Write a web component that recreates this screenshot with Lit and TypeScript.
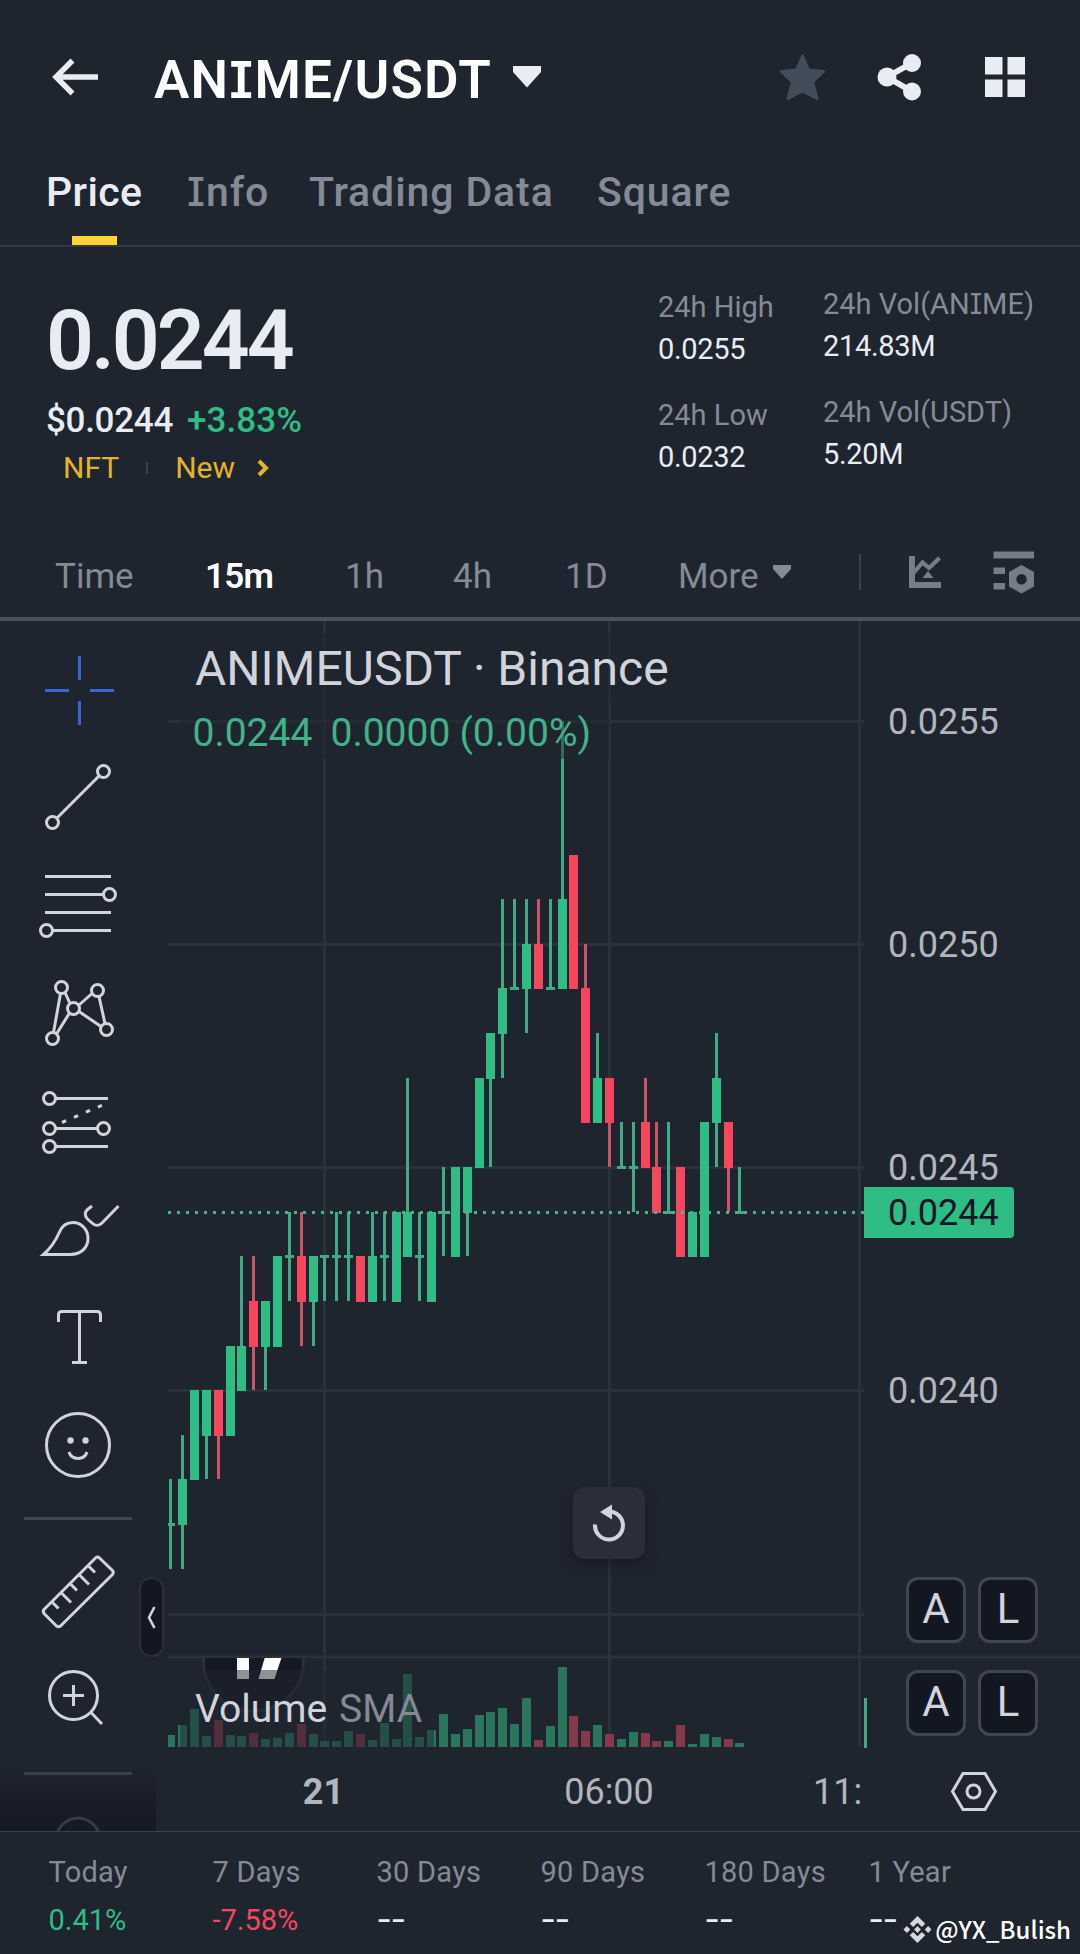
import { LitElement, html, svg, css } from "lit";
import { customElement } from "lit/decorators.js";

type Candle = [dir: 0 | 1, high: number, top: number, bottom: number, low: number, volume: number];

// Prices are in ticks of 0.0001; dir 1 = rising, 0 = falling.
const CANDLES: Candle[] = [
  [1, 238, 237, 237, 236, 12], [1, 239, 238, 237, 236, 22], [1, 240, 240, 238, 238, 38],
  [1, 240, 240, 239, 238, 11], [0, 240, 240, 239, 238, 27], [1, 241, 241, 239, 239, 12],
  [1, 243, 241, 240, 240, 11], [0, 243, 242, 241, 240, 14], [1, 242, 242, 241, 240, 8],
  [1, 243, 243, 241, 241, 9], [1, 244, 243, 243, 242, 14], [0, 244, 243, 242, 241, 23],
  [1, 243, 243, 242, 241, 13], [1, 243, 243, 243, 242, 6], [1, 244, 243, 243, 242, 6],
  [1, 244, 243, 243, 242, 16], [0, 243, 243, 242, 242, 13], [1, 244, 243, 242, 242, 7],
  [1, 244, 243, 243, 242, 24], [1, 244, 244, 242, 242, 8], [1, 247, 244, 243, 243, 73],
  [1, 244, 243, 243, 242, 10], [1, 244, 244, 242, 242, 17], [1, 245, 244, 244, 243, 33],
  [1, 245, 245, 243, 243, 13], [1, 245, 245, 244, 243, 18], [1, 247, 247, 245, 245, 32],
  [1, 248, 248, 247, 245, 35], [1, 251, 249, 248, 247, 39], [1, 251, 249, 249, 249, 23],
  [1, 251, 250, 249, 248, 49], [0, 251, 250, 249, 249, 7], [1, 251, 249, 249, 249, 21],
  [1, 255, 251, 249, 249, 80], [0, 252, 252, 249, 249, 31], [0, 250, 249, 246, 246, 16],
  [1, 248, 247, 246, 246, 22], [0, 247, 247, 246, 245, 13], [1, 246, 245, 245, 245, 8],
  [1, 246, 245, 245, 244, 15], [0, 247, 246, 245, 245, 14], [0, 246, 245, 244, 244, 6],
  [1, 246, 244, 244, 244, 6], [0, 245, 245, 243, 243, 22], [1, 244, 244, 243, 243, 3],
  [1, 246, 246, 243, 243, 13], [1, 248, 247, 246, 245, 10], [0, 246, 246, 245, 244, 8],
  [1, 245, 244, 244, 244, 4],
];

const candleX = (i: number) => 170.5 + 12 * i - Math.floor((i + 1) / 7);
const priceY = (tick: number) => Math.round(1167 + (245 - tick) * 44.63) + 0.5;

const serifI = html`<span class="si">I</span>`;

@customElement("tool-rail")
export class ToolRail extends LitElement {
  static styles = css`
    :host { display: flex; flex-direction: column; width: 168px; height: 1210px; padding-top: 15px; box-sizing: border-box; overflow: hidden; position: relative; }
    svg { display: block; flex: none; width: 168px; fill: none; stroke: #d1d4dc; stroke-width: 3; }
    .cross { stroke: #3b66d1; }
    .rule { stroke: #434651; }
    .solid { fill: #d1d4dc; stroke: none; }
    .fade { position: absolute; left: 0; bottom: 0; width: 156px; height: 66px; background: linear-gradient(#1f252f00, #151a24 80%); }
    .more { stroke: #363b46; position: relative; }
  `;

  private cell(y: number, h: number, content: unknown, cls = "") {
    return html`<svg class=${cls} height=${h} viewBox="0 ${y} 168 ${h}">${content}</svg>`;
  }

  render() {
    const dot = (x: number, y: number) => svg`<circle cx=${x} cy=${y} r="6"/>`;
    return html`
      <div class="fade"></div>
      ${this.cell(636, 108, svg`<path d="M79.5 656v24M79.5 701v24M45 690.5h24M90 690.5h24"/>`, "cross")}
      ${this.cell(744, 108, svg`${dot(52.5, 822.5)}${dot(103.5, 771.5)}<path d="M57 818L99 776"/>`)}
      ${this.cell(852, 108, svg`<path d="M45 876.5h66M45 894.5h58M45 912.5h66M53 930.5h58"/>${dot(109.5, 894.5)}${dot(46.5, 930.5)}`)}
      ${this.cell(960, 108, svg`${dot(61.5, 987.5)}${dot(97.5, 990.5)}${dot(73.5, 1008.5)}${dot(106.5, 1029.5)}${dot(52.5, 1038.5)}
        <path d="M60.500 993.500L53.500 1032.500M65 992.500L70 1003.500M69.500 1013L56.500 1034M79 1005L92 993.500M79 1011.500L101 1026.500M99 996.500L105 1023.500"/>`)}
      ${this.cell(1068, 108, svg`${dot(49.5, 1098.5)}${dot(49.5, 1128.5)}${dot(103.5, 1128.5)}${dot(49.5, 1146.5)}
        <path d="M56 1098.500h52M56 1128.500h41M56 1146.500h52"/><path stroke-dasharray="4.500 8.500" d="M62 1122.500L105 1104"/>`)}
      ${this.cell(1176, 108, svg`<path d="M43.500 1254.500H70C82 1254.500 88 1247 88 1238.500C88 1229 81 1222.500 73 1222.500C66 1222.500 62 1226 59.500 1232C56 1240 51 1248 43.500 1254.500Z"/>
        <path d="M92 1206L87.500 1209.500C84.500 1212 84.500 1216 87.500 1219L92 1223C95 1226 99 1226 102 1223L118.500 1206"/>`)}
      ${this.cell(1284, 108, svg`<path d="M58.500 1322V1315Q58.500 1311.500 62 1311.500H97Q100.500 1311.500 100.500 1315V1322M79.500 1311.500V1362.500M72 1362.500H87"/>`)}
      ${this.cell(1392, 108, svg`<circle cx="78" cy="1445" r="31.500"/><circle class="solid" cx="70.500" cy="1440.500" r="3.200"/><circle class="solid" cx="85.500" cy="1440.500" r="3.200"/><path d="M69 1452Q71 1458.500 78 1458.500T87 1452"/>`)}
      ${this.cell(1500, 36, svg`<path d="M24 1518.500H132"/>`, "rule")}
      ${this.cell(1536, 108, svg`<path stroke-linejoin="round" d="M95.500 1558Q97.500 1556 99.500 1558L112.500 1570.500Q114 1572.500 112.500 1574.500L60.500 1626Q58.500 1627.500 56.500 1626L44 1613.500Q42.500 1611.500 44 1609.500Z"/>
        <path d="M52 1602l6.500 6.500M61.500 1593l9.500 9.500M70.500 1584l6.500 6.500M79.500 1575l9.500 9.500M88.500 1566l6.500 6.500"/>`)}
      ${this.cell(1644, 108, svg`<circle cx="73.500" cy="1695.500" r="24"/><path d="M91 1712.500L102 1724M63 1695.500H84M73.500 1685V1706"/>`)}
      ${this.cell(1752, 36, svg`<path d="M24 1773.500H132"/>`, "rule")}
      ${this.cell(1788, 43, svg`<circle cx="78" cy="1840" r="22"/>`, "more")}
    `;
  }
}

@customElement("price-chart")
export class PriceChart extends LitElement {
  static styles = css`
    :host { display: block; position: relative; width: 912px; height: 1210px; font-family: Roboto, sans-serif; }
    .plot { display: block; }
    .grid { stroke: #2b313b; stroke-width: 3; }
    .up { fill: #2ebd85; }
    .down { fill: #f6465d; }
    .wick.up { fill: #42ab86; }
    .wick.down { fill: #cb5366; }
    .vol.up { fill: #2a765d; }
    .vol.down { fill: #86394b; }
    .last { stroke: #48b48b; stroke-width: 3; stroke-dasharray: 3 6; }
    .veil { fill: #1f252f; opacity: 0.5; }
    .axis { fill: #b2b5be; font-size: 36px; }
    .bold { font-weight: 700; }
    .tag { fill: #131722; font-size: 36px; }
    .ring { fill: #141923; stroke: #2b303b; stroke-width: 3; }
    .mark { fill: #ffffff; }
    .icon { fill: none; stroke: #d1d4dc; stroke-width: 3; }
    .legend { position: absolute; white-space: pre; line-height: 60px; color: #d1d4dc; }
    .name { left: 27px; top: 17.500px; font-size: 48px; }
    .quote { left: 24.500px; top: 81.500px; font-size: 39px; color: #42b288; display: flex; }
    .quote span:nth-child(1) { width: 138px; }
    .quote span:nth-child(2) { width: 129px; }
    .volume { left: 27px; top: 1058px; font-size: 39px; display: flex; gap: 12px; }
    .muted { color: #868993; }
    .pair { position: absolute; left: 738px; display: flex; gap: 12px; }
    .price-scale { top: 956px; }
    .volume-scale { top: 1049px; }
    .key { box-sizing: border-box; width: 60px; height: 66px; border: 3px solid #434651; border-radius: 12px; background: #131722; color: #d1d4dc; font-size: 42px; line-height: 58px; text-align: center; }
    .reset { position: absolute; left: 405px; top: 866px; width: 72px; height: 72px; border-radius: 12px; background: #2a2e38; box-shadow: 0 6px 12px #10141c99; }
    .reset svg { display: block; }
    .handle { position: absolute; box-sizing: border-box; left: -29px; top: 956px; width: 25px; height: 80px; border: 2px solid #2a2e39; border-radius: 12px; background: #131722; }
    .handle svg { display: block; }
  `;

  private candle([dir, high, top, bottom, low, volume]: Candle, i: number) {
    const x = candleX(i);
    const tone = dir ? "up" : "down";
    const left = Math.max(168, x - 4.5);
    const width = x + 4.5 - left;
    const doji = top === bottom;
    const y = priceY(top) - (doji ? 1.5 : 0.5);
    return svg`
      <rect class="vol ${tone}" x=${left} y=${1747 - volume} width=${width} height=${volume}/>
      ${high > low ? svg`<rect class="wick ${tone}" x=${x - 1.5} y=${priceY(high) - 0.5} width="3" height=${priceY(low) - priceY(high)}/>` : ""}
      <rect class="${doji ? "wick" : ""} ${tone}" x=${left} y=${y} width=${width} height=${doji ? 3 : priceY(bottom) - priceY(top) + 1}/>`;
  }

  render() {
    return html`
      <svg class="plot" width="912" height="1210" viewBox="168 621 912 1210">
        <g class="grid">
          ${[324.5, 609.5, 859.5].map((x) => svg`<path d="M${x} 621V1747"/>`)}
          ${[721.5, 944.5, 1167.5, 1390.5, 1614.5].map((y) => svg`<path d="M168 ${y}H864"/>`)}
          <path d="M168 1657H1080"/>
        </g>
        <clipPath id="pane"><rect x="168" y="1658" width="400" height="90"/></clipPath>
        <g clip-path="url(#pane)">
          <circle class="ring" cx="253.500" cy="1661" r="50"/>
          <path class="mark" d="M237 1650h12v29h-12zM267 1650h17L274.500 1679h-16z"/>
        </g>
        ${CANDLES.map((c, i) => this.candle(c, i))}
        <path class="last" d="M168 1212.500H864"/>
        <rect class="veil" x="180" y="633" width="500" height="66"/>
        <rect class="veil" x="180" y="699" width="429" height="60"/>
        <rect class="veil" x="180" y="1670" width="254" height="77"/>
        <rect class="wick up" x="864" y="1698" width="3" height="50"/>
        <g class="axis">
          <text x="888" y="734">0.0255</text>
          <text x="888" y="957">0.0250</text>
          <text x="888" y="1180">0.0245</text>
          <text x="888" y="1403">0.0240</text>
          <text class="bold" x="323.500" y="1804" text-anchor="middle">21</text>
          <text x="609" y="1804" text-anchor="middle">06:00</text>
          <text x="813" y="1804">11:</text>
        </g>
        <path class="up" d="M864 1187h146q4 0 4 4v43q0 4-4 4h-146z"/>
        <text class="tag" x="888" y="1225">0.0244</text>
        <path class="icon" d="M952.500 1791.500L963 1773.500H985L995.500 1791.500L985 1809.500H963Z"/>
        <circle class="icon" cx="973.500" cy="1791.500" r="6.500"/>
      </svg>
      <div class="legend name">ANIMEUSDT · Binance</div>
      <div class="legend quote"><span>0.0244</span><span>0.0000</span><span>(0.00%)</span></div>
      <div class="legend volume"><span>Volume</span><span class="muted">SMA</span></div>
      <div class="reset"><svg width="72" height="72" viewBox="573 1487 72 72">
        <path fill="none" stroke="#d1d4dc" stroke-width="4" d="M595 1524.500A14 14 0 1 0 609 1511.500"/>
        <path fill="#d1d4dc" d="M600 1512L612 1504.500V1519.500Z"/></svg></div>
      <div class="pair price-scale"><div class="key">A</div><div class="key">L</div></div>
      <div class="pair volume-scale"><div class="key">A</div><div class="key">L</div></div>
      <div class="handle"><svg width="21" height="76" viewBox="141 1579 21 76"><path fill="none" stroke="#d1d4dc" stroke-width="2.600" d="M154.500 1607L149 1617.500L154.500 1628"/></svg></div>
    `;
  }
}

@customElement("app-root")
export class AppRoot extends LitElement {
  static styles = css`
    :host { display: block; width: 1080px; height: 1954px; overflow: hidden; background: #1f252f; color: #eaecf4; font-family: Roboto, sans-serif; }
    .si { font-family: Inter, sans-serif; font-feature-settings: "cv08" 1, "ss02" 1; font-size: 0.97em; }
    .top { display: flex; align-items: center; height: 154px; }
    .back { margin-left: 50px; }
    .pair { margin-left: 54px; padding-top: 5px; width: 336px; font-size: 53px; font-weight: 600; color: #ffffff; white-space: nowrap; letter-spacing: 1.200px; }
    .caret { margin-left: 22px; margin-right: auto; }
    .actions { display: flex; align-items: center; padding-right: 54px; gap: 48px; }
    .apps { margin-left: 12px; }
    svg { display: block; flex: none; }
    .tabs { display: grid; grid-template-columns: 141px 122px 288px auto; box-sizing: border-box; height: 93px; padding-left: 46px; border-bottom: 2px solid #333a45; font-size: 41px; line-height: 76px; color: #858a97; font-weight: 500; letter-spacing: 0.9px; }
    .tab { width: max-content; white-space: nowrap; }
    .tab.on { color: #eaecf4; letter-spacing: 0.4px; }
    .tab.on::after { content: ""; display: block; width: 45px; height: 9px; margin: 6px auto 0; background: #fcd535; }
    .stats { display: flex; height: 288px; }
    .left { width: 613px; box-sizing: border-box; padding: 44px 0 0 46px; white-space: nowrap; }
    .facts:not(.right) { margin-left: 45px; }
    .price { font-size: 84px; line-height: 100px; font-weight: 600; letter-spacing: -3px; }
    .sub { display: flex; margin-top: 10px; font-size: 35px; line-height: 40px; font-weight: 500; letter-spacing: -0.300px; }
    .usd { width: 141px; }
    .gain { color: #2ebd85; letter-spacing: 0.100px; }
    .tags { display: flex; align-items: center; margin: 9px 0 0 17px; font-size: 30px; line-height: 36px; color: #e3b32c; }
    .bar { width: 2px; height: 12px; margin: 0 27px 0 27px; background: #3a414d; }
    .chev { margin-left: 22px; }
    .facts { padding-top: 39px; width: 165px; font-size: 29px; line-height: 42px; white-space: nowrap; }
    .facts.right { padding-top: 36px; width: auto; }
    .label { color: #858a97; }
    .figure { letter-spacing: -0.300px; }
    .fact + .fact { margin-top: 24px; }
    .spans { display: grid; grid-template-columns: 150px 140px 108px 112px 113px 94px 87px 49px 85px 41px; align-items: center; box-sizing: border-box; height: 86px; padding-left: 55px; border-bottom: 4px solid #4b515c; font-size: 35px; color: #858a97; }
    .spans .on { color: #ffffff; font-weight: 600; letter-spacing: -0.700px; }
    .divider { width: 2px; height: 36px; margin-bottom: 8px; background: #3a414d; }
    .lift { margin-bottom: 8px; }
    .body { display: flex; }
    .foot { display: flex; position: relative; box-sizing: border-box; height: 123px; padding: 19px 0 0 48.500px; border-top: 1px solid #3a404b; font-size: 29px; }
    .period { width: 164px; line-height: 42px; white-space: nowrap; }
    .period .label { height: 48px; letter-spacing: 0.250px; }
    .pos { color: #2ebd85; }
    .neg { color: #f6465d; }
    .none { font-weight: 500; transform: scaleX(1.450); transform-origin: left; }
    .brand { position: absolute; right: 9px; bottom: 6px; display: flex; align-items: center; gap: 3px; color: #ffffff; font-family: "Noto Sans CJK SC", "Noto Sans", sans-serif; font-size: 24px; line-height: 38px; font-weight: 500; }
  `;

  private fact(label: string, value: string, mark = false) {
    const [head, tail] = label.split("I");
    return html`<div class="fact"><div class="label">${mark ? html`${head}${serifI}${tail}` : label}</div><div class="figure">${value}</div></div>`;
  }

  render() {
    const periods = [
      ["Today", "0.41%", "pos"], ["7 Days", "-7.58%", "neg"], ["30 Days", "--", "none"],
      ["90 Days", "--", "none"], ["180 Days", "--", "none"], ["1 Year", "--", "none"],
    ];
    return html`
      <div class="top">
        <svg class="back" width="50" height="50" viewBox="50 52 50 50"><path fill="none" stroke="#eaecf4" stroke-width="5.500" d="M98 77H56M72.500 60.500L56 77L72.500 93.500"/></svg>
        <div class="pair">AN${serifI}ME/USDT</div>
        <svg class="caret" width="30" height="24" viewBox="512 66 30 24"><path fill="#eaecf4" d="M513 67h28v6L527 88.500L513 73z"/></svg>
        <div class="actions">
          <svg width="48" height="48" viewBox="778 53 48 48"><path fill="#434d59" stroke="#434d59" stroke-width="3" stroke-linejoin="round" d="M802.500 56L808.500 70L823.500 71.500L812.500 82L817 98.500L802.500 91L788 98.500L792.500 82L781.500 71.500L796.500 70Z"/></svg>
          <svg width="50" height="50" viewBox="874 52 50 50"><g fill="#eaecf4"><circle cx="912" cy="63" r="9"/><circle cx="887" cy="77" r="9.500"/><circle cx="912" cy="91.500" r="9"/></g><path fill="none" stroke="#eaecf4" stroke-width="6" d="M912 63L887 77L912 91.500"/></svg>
          <svg class="apps" width="42" height="42" viewBox="984 56 42 42"><path fill="#eaecf4" d="M985 57h17.500v17.500h-17.500zM1007.500 57h17.500v17.500h-17.500zM985 79.500h17.500v17.500h-17.500zM1007.500 79.500h17.500v17.500h-17.500z"/></svg>
        </div>
      </div>
      <div class="tabs">
        <div class="tab on">Price</div><div class="tab">${serifI}nfo</div><div class="tab">Trading Data</div><div class="tab">Square</div>
      </div>
      <div class="stats">
        <div class="left">
          <div class="price">0.0244</div>
          <div class="sub"><span class="usd">$0.0244</span><span class="gain">+3.83%</span></div>
          <div class="tags"><span>NFT</span><span class="bar"></span><span>New</span>
            <svg class="chev" width="12" height="18" viewBox="259 458 12 18"><path fill="none" stroke="#e3b32c" stroke-width="4" d="M261 460L268 467L261 474"/></svg></div>
        </div>
        <div class="facts">${this.fact("24h High", "0.0255")}${this.fact("24h Low", "0.0232")}</div>
        <div class="facts right">${this.fact("24h Vol(ANIME)", "214.83M", true)}${this.fact("24h Vol(USDT)", "5.20M")}</div>
      </div>
      <div class="spans">
        <span>Time</span><span class="on">15m</span><span>1h</span><span>4h</span><span>1D</span><span>More</span>
        <svg class="lift" width="20" height="16" viewBox="772 564 20 16"><path fill="#858a97" d="M773 565h18v4L782 579L773 569z"/></svg>
        <span class="divider"></span>
        <svg class="lift" width="34" height="34" viewBox="908 555 34 34"><path fill="none" stroke="#767c88" stroke-width="6" d="M912 556V585H941"/><path fill="none" stroke="#767c88" stroke-width="4.200" d="M913 573.500L922.500 562.500L929 568L939.500 558"/><path fill="#767c88" d="M922.500 578L928 571L933.500 578z"/></svg>
        <svg class="lift" width="42" height="46" viewBox="993.500 550 42 46"><path fill="#767c88" d="M994 552.500h40.500v7h-40.500zM994 568.500h11.500v6.500h-11.500zM994 584h11.500v6.500h-11.500z"/><path fill="#767c88" fill-rule="evenodd" d="M1022 566L1034.500 573V587.500L1022 594.500L1009.500 587.500V573ZM1022 575A5.200 5.200 0 1 0 1022 585.400A5.200 5.200 0 1 0 1022 575Z"/></svg>
      </div>
      <div class="body"><tool-rail></tool-rail><price-chart></price-chart></div>
      <div class="foot">
        ${periods.map(([label, value, tone]) => html`<div class="period"><div class="label">${label}</div><div class=${tone}>${value}</div></div>`)}
        <div class="brand">
          <svg width="29" height="29" viewBox="0 0 30 30"><path fill="#d5d8e0" d="M15 1L23 9L19.500 12.500L15 8L10.500 12.500L7 9ZM15 29L23 21L19.500 17.500L15 22L10.500 17.500L7 21ZM4 11.500L7.500 15L4 18.500L.5 15ZM26 11.500L29.500 15L26 18.500L22.500 15ZM15 11.500L18.500 15L15 18.500L11.500 15Z"/></svg>
          <span>@YX_Bulish</span>
        </div>
      </div>
    `;
  }
}
